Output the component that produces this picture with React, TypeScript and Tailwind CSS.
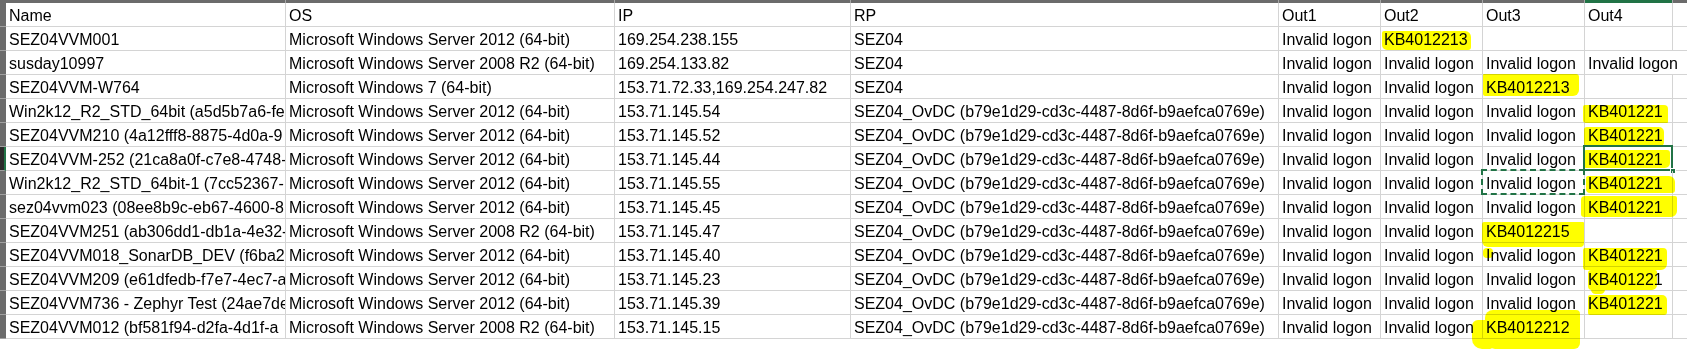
import React from "react";

type Mark = { cls: string };

const COLS = ["w-[280px]", "w-[329px]", "w-[236px]", "w-[428px]", "w-[102px]", "w-[102px]", "w-[102px]", "w-[88px]"];

const RP = "SEZ04_OvDC (b79e1d29-cd3c-4487-8d6f-b9aefca0769e)";
const OS12 = "Microsoft Windows Server 2012 (64-bit)";
const OS08 = "Microsoft Windows Server 2008 R2 (64-bit)";
const IL = "Invalid logon";

const header = ["Name", "OS", "IP", "RP", "Out1", "Out2", "Out3", "Out4"];

// names are cut by the next column, as in the sheet
const rows: string[][] = [
  ["SEZ04VVM001", OS12, "169.254.238.155", "SEZ04", IL, "KB4012213", "", ""],
  ["susday10997", OS08, "169.254.133.82", "SEZ04", IL, IL, IL, IL],
  ["SEZ04VVM-W764", "Microsoft Windows 7 (64-bit)", "153.71.72.33,169.254.247.82", "SEZ04", IL, IL, "KB4012213", ""],
  ["Win2k12_R2_STD_64bit (a5d5b7a6-fe", OS12, "153.71.145.54", RP, IL, IL, IL, "KB401221"],
  ["SEZ04VVM210 (4a12fff8-8875-4d0a-9", OS12, "153.71.145.52", RP, IL, IL, IL, "KB401221"],
  ["SEZ04VVM-252 (21ca8a0f-c7e8-4748-", OS12, "153.71.145.44", RP, IL, IL, IL, "KB401221"],
  ["Win2k12_R2_STD_64bit-1 (7cc52367-", OS12, "153.71.145.55", RP, IL, IL, IL, "KB401221"],
  ["sez04vvm023 (08ee8b9c-eb67-4600-8", OS12, "153.71.145.45", RP, IL, IL, IL, "KB401221"],
  ["SEZ04VVM251 (ab306dd1-db1a-4e32-", OS08, "153.71.145.47", RP, IL, IL, "KB4012215", ""],
  ["SEZ04VVM018_SonarDB_DEV (f6ba24", OS12, "153.71.145.40", RP, IL, IL, IL, "KB401221"],
  ["SEZ04VVM209 (e61dfedb-f7e7-4ec7-a", OS12, "153.71.145.23", RP, IL, IL, IL, "KB401221"],
  ["SEZ04VVM736 - Zephyr Test (24ae7de", OS12, "153.71.145.39", RP, IL, IL, IL, "KB401221"],
  ["SEZ04VVM012 (bf581f94-d2fa-4d1f-a", OS08, "153.71.145.15", RP, IL, IL, "KB4012212", ""],
];

// highlighter strokes, keyed "row-col" (row 1 = first data row)
const marks: Record<string, Mark[]> = {
  "1-5": [{ cls: "left-[1px] top-[4px] w-[89px] h-[19px] rounded-[2px_6px_3px_5px]" }],
  "3-6": [{ cls: "left-[0px] top-[-1px] w-[96px] h-[22px] rounded-[1px_3px_6px_2px]" }],
  "4-7": [{ cls: "left-[-2px] top-[6px] w-[85px] h-[18px] rounded-[2px_4px_1px_3px]" }],
  "5-7": [{ cls: "left-[-1px] top-[4px] w-[80px] h-[19px] rounded-[3px_5px_4px_2px]" }],
  "6-7": [{ cls: "left-[-1px] top-[3px] w-[86px] h-[18px] rounded-[2px_3px_5px_2px]" }],
  "7-7": [{ cls: "left-[1px] top-[5px] w-[89px] h-[17px] rounded-[2px_6px_3px_4px]" }],
  "8-7": [{ cls: "left-[-4px] top-[1px] w-[96px] h-[21px] rounded-[4px_2px_6px_3px]" }],
  "9-6": [{ cls: "left-[-1px] top-[3px] w-[102px] h-[25px] rounded-[2px_1px_4px_6px]" }],
  "10-6": [{ cls: "left-[0px] top-[5px] w-[10px] h-[10px] rounded-[4px]" }],
  "10-7": [{ cls: "left-[-2px] top-[5px] w-[84px] h-[22px] rounded-[2px_4px_6px_3px]" }],
  "11-7": [
    { cls: "left-[3px] top-[3px] w-[69px] h-[20px] rounded-[3px_2px_5px_4px]" },
    { cls: "left-[6px] top-[18px] w-[14px] h-[9px] rounded-[6px]" },
  ],
  "12-7": [{ cls: "left-[3px] top-[4px] w-[79px] h-[20px] rounded-[2px_5px_3px_2px]" }],
  "13-6": [
    { cls: "left-[2px] top-[-5px] w-[95px] h-[39px] rounded-[8px_4px_6px_10px]" },
    { cls: "left-[-11px] top-[5px] w-[20px] h-[29px] rounded-[6px_2px_2px_10px]" },
  ],
};

function Cell({ r, c, text }: { r: number; c: number; text: string }) {
  const m = marks[`${r}-${c}`];
  const active = r === 6 && c === 7;
  const copied = r === 7 && c === 6;
  const spill = r === 2 && c === 7;
  const positioned = m || active || copied;
  return (
    <div
      className={`${COLS[c]} shrink-0 h-[24px] border-b border-[#d4d4d4] ${spill ? "border-r-0" : "border-r"} ${
        positioned ? "relative" : ""
      }`}
    >
      <div className={`h-full pl-[3px] pt-[3px] leading-[20px] whitespace-nowrap ${spill ? "overflow-visible w-[100px]" : "overflow-hidden"}`}>
        {text}
      </div>
      {m &&
        m.map((k, i) => (
          <span key={i} className={`absolute ${k.cls} bg-[#ffff00] mix-blend-multiply pointer-events-none`} />
        ))}
      {active && (
        <>
          <span className="absolute left-[-2px] top-[-2px] right-[-1px] bottom-[-1px] border-2 border-[#217346]" />
          <span className="absolute right-[-4px] bottom-[-4px] w-[6px] h-[6px] bg-[#217346] border border-white" />
        </>
      )}
      {copied && (
        <span className="absolute left-[-2px] top-[-2px] right-[-1px] bottom-[-1px] border-2 border-dashed border-[#217346]" />
      )}
    </div>
  );
}

export default function App() {
  const all = [header, ...rows];
  return (
    <div className="w-[1687px] h-[350px] bg-white overflow-hidden text-[16px] text-black font-['Liberation_Sans',Arial,sans-serif]">
      {/* column header strip, cropped */}
      <div className="flex h-[3px] bg-[#6b6b6b]">
        <div className="w-[6px] shrink-0" />
        {COLS.map((w, i) => (
          <div key={i} className={`${w} shrink-0 border-r border-[#a6a6a6] ${i === 7 ? "bg-[#217346]" : ""}`} />
        ))}
        <div className="flex-1" />
      </div>
      {all.map((row, r) => (
        <div key={r} className="flex">
          <div
            className={`w-[6px] shrink-0 h-[24px] border-b border-[#a0a0a0] ${
              r === 6 ? "bg-[#2b2b2b] border-r-2 border-r-[#217346]" : "bg-[#6b6b6b]"
            }`}
          />
          {row.map((t, c) => (
            <Cell key={c} r={r} c={c} text={t} />
          ))}
          <div className="flex-1 h-[24px] border-b border-[#d4d4d4]" />
        </div>
      ))}
    </div>
  );
}
